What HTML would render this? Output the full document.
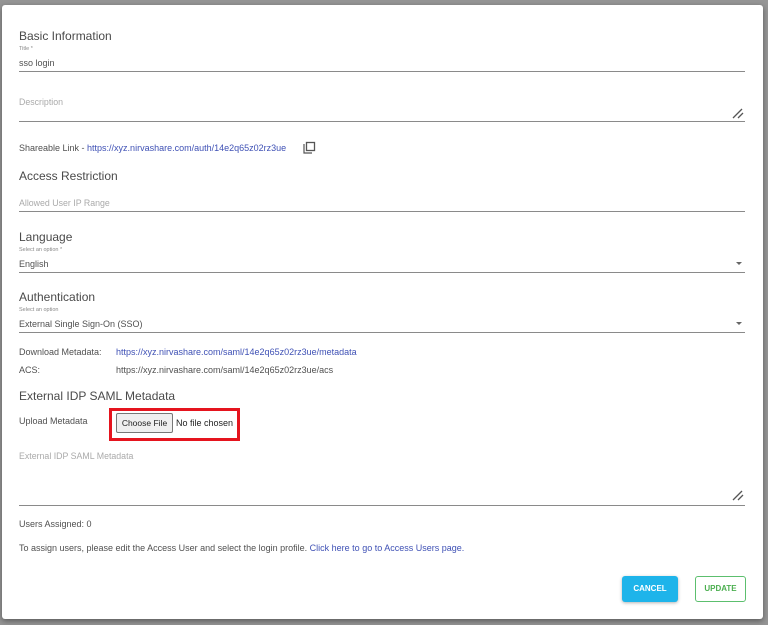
<!DOCTYPE html>
<html><head><meta charset="utf-8"><style>
*{margin:0;padding:0;box-sizing:border-box}
body{width:768px;height:625px;background:#959595;position:relative;overflow:hidden;font-family:"Liberation Sans",sans-serif;color:#333}
.dlg{position:absolute;left:2px;top:5px;width:761px;height:614px;background:#fff;border-radius:3px;box-shadow:0 2px 6px rgba(0,0,0,.4)}
.t{position:absolute;white-space:nowrap;line-height:1}
.h{font-size:12px;color:#4a4a4a}
.s{font-size:9px;color:#505050}
.tiny{font-size:5.5px;color:#888}
.ph{font-size:8.8px;color:#aaa}
.ln{position:absolute;left:19px;width:726px;height:1px;background:#8a8a8a}
a{color:#3f51b5;text-decoration:none}
.arrow{position:absolute;width:0;height:0;border-left:3px solid transparent;border-right:3px solid transparent;border-top:3px solid #666}
</style></head><body>
<div class="dlg"></div>
<div class="t h" style="left:19px;top:30px">Basic Information</div>
<div class="t tiny" style="left:19px;top:47px">Title *</div>
<div class="t s" style="left:19px;top:59px">sso login</div>
<div class="ln" style="top:71px"></div>
<div class="t ph" style="left:19px;top:98px">Description</div>
<svg style="position:absolute;left:731px;top:107px" width="14" height="12"><path d="M2 11 L11 2 M7 11 L12 6" stroke="#555" stroke-width="1.3"/></svg>
<div class="ln" style="top:121px"></div>
<div class="t s" style="left:19px;top:144px">Shareable Link - <a>https://xyz.nirvashare.com/auth/14e2q65z02rz3ue</a></div>
<svg style="position:absolute;left:302px;top:141px" width="14" height="14"><path d="M2 3 V12 H10" fill="none" stroke="#555" stroke-width="1.2"/><rect x="4.5" y="1.5" width="8" height="8" fill="none" stroke="#555" stroke-width="1.3"/></svg>
<div class="t h" style="left:19px;top:170px">Access Restriction</div>
<div class="t ph" style="left:19px;top:199px">Allowed User IP Range</div>
<div class="ln" style="top:211px"></div>
<div class="t h" style="left:19px;top:231px">Language</div>
<div class="t tiny" style="left:19px;top:248px">Select an option *</div>
<div class="t s" style="left:19px;top:260px">English</div>
<div class="arrow" style="left:736px;top:262px"></div>
<div class="ln" style="top:272px"></div>
<div class="t h" style="left:19px;top:291px">Authentication</div>
<div class="t tiny" style="left:19px;top:308px">Select an option</div>
<div class="t s" style="left:19px;top:320px">External Single Sign-On (SSO)</div>
<div class="arrow" style="left:736px;top:322px"></div>
<div class="ln" style="top:332px"></div>
<div class="t s" style="left:19px;top:348px">Download Metadata:</div>
<div class="t s" style="left:116px;top:348px"><a>https://xyz.nirvashare.com/saml/14e2q65z02rz3ue/metadata</a></div>
<div class="t s" style="left:19px;top:366px">ACS:</div>
<div class="t s" style="left:116px;top:366px">https://xyz.nirvashare.com/saml/14e2q65z02rz3ue/acs</div>
<div class="t h" style="left:19px;top:390px">External IDP SAML Metadata</div>
<div class="t s" style="left:19px;top:417px">Upload Metadata</div>
<div style="position:absolute;left:109px;top:408px;width:131px;height:33px;border:3px solid #e5141e"></div>
<div style="position:absolute;left:116px;top:413px;width:57px;height:20px;background:#efefef;border:1px solid #777;border-radius:2px;font-size:8.5px;line-height:18px;text-align:center;color:#222">Choose File</div>
<div class="t s" style="left:176px;top:419px;color:#222">No file chosen</div>
<div class="t ph" style="left:19px;top:452px">External IDP SAML Metadata</div>
<svg style="position:absolute;left:731px;top:489px" width="14" height="12"><path d="M2 11 L11 2 M7 11 L12 6" stroke="#555" stroke-width="1.3"/></svg>
<div class="ln" style="top:505px"></div>
<div class="t s" style="left:19px;top:520px">Users Assigned: 0</div>
<div class="t s" style="left:19px;top:544px">To assign users, please edit the Access User and select the login profile. <a>Click here to go to Access Users page.</a></div>
<div style="position:absolute;left:622px;top:576px;width:56px;height:26px;background:#1eb4ea;border-radius:3px;box-shadow:0 1px 3px rgba(0,0,0,.3);color:#fff;font-size:8px;font-weight:bold;line-height:26px;text-align:center">CANCEL</div>
<div style="position:absolute;left:695px;top:576px;width:51px;height:26px;border:1px solid #5cbf6e;border-radius:3px;color:#4caf50;font-size:8px;font-weight:bold;line-height:24px;text-align:center">UPDATE</div>
</body></html>
